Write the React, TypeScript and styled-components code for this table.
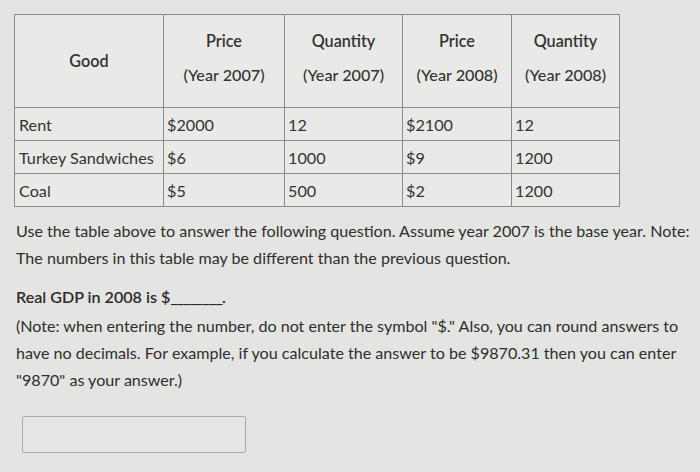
import styled, { createGlobalStyle } from "styled-components";

const GlobalStyle = createGlobalStyle`
  html, body {
    margin: 0;
    padding: 0;
    background: #e4e4e2;
  }
  body {
    font-family: Lato, "Open Sans", sans-serif;
    color: #2e2e2e;
  }
`;

const headers = [
  { top: "Price", bottom: "(Year 2007)" },
  { top: "Quantity", bottom: "(Year 2007)" },
  { top: "Price", bottom: "(Year 2008)" },
  { top: "Quantity", bottom: "(Year 2008)" },
];

const rows = [
  ["Rent", "$2000", "12", "$2100", "12"],
  ["Turkey Sandwiches", "$6", "1000", "$9", "1200"],
  ["Coal", "$5", "500", "$2", "1200"],
];

const widths = [149, 121, 118, 109, 108];

const App = () => {
  return (
    <>
      <GlobalStyle />
      <Page>
        <Table>
          <colgroup>
            {widths.map((w, i) => (
              <col key={i} style={{ width: w }} />
            ))}
          </colgroup>
          <thead>
            <tr>
              <GoodCell>Good</GoodCell>
              {headers.map((h, i) => (
                <HeadCell key={i}>
                  <HeadLine>{h.top}</HeadLine>
                  <HeadLine>{h.bottom}</HeadLine>
                </HeadCell>
              ))}
            </tr>
          </thead>
          <tbody>
            {rows.map((r, i) => (
              <tr key={i}>
                {r.map((c, j) => (
                  <Cell key={j}>{c}</Cell>
                ))}
              </tr>
            ))}
          </tbody>
        </Table>

        <Text>
          Use the table above to answer the following question. Assume year 2007 is the base year. Note:
          The numbers in this table may be different than the previous question.
        </Text>
        <Prompt>
          Real GDP in 2008 is $<Blank>________</Blank>.
        </Prompt>
        <Note>
          (Note: when entering the number, do not enter the symbol "$." Also, you can round answers to
          have no decimals. For example, if you calculate the answer to be $9870.31 then you can enter
          "9870" as your answer.)
        </Note>
        <Answer type="text" aria-label="answer" />
      </Page>
    </>
  );
};

const Page = styled.main`
  display: flex;
  flex-direction: column;
  align-items: flex-start;
  padding: 14px 0 0 14px;
  width: 700px;
  height: 472px;
  box-sizing: border-box;
  overflow: hidden;
`;

const Table = styled.table`
  border-collapse: collapse;
  table-layout: fixed;
  width: 605px;
  background: #e9e9e7;
  font-size: 16.2px;
  color: #333;
`;

const HeadCell = styled.th`
  height: 93px;
  border: 1px solid #8a8a88;
  font-weight: 600;
  text-align: center;
  vertical-align: middle;
  padding: 0 0 6px;
  box-sizing: border-box;
`;

const GoodCell = styled(HeadCell)`
  padding: 0 0 2px;
`;

const HeadLine = styled.div`
  line-height: 34px;
  &:last-child {
    font-weight: 500;
  }
`;

const Cell = styled.td`
  height: 33px;
  border: 1px solid #8a8a88;
  padding: 0 0 0 3px;
  box-sizing: border-box;
  text-align: left;
  vertical-align: middle;
  white-space: nowrap;
  &:first-child {
    padding-left: 4px;
  }
`;

const Text = styled.p`
  margin: 10px 0 0 2px;
  width: 690px;
  font-size: 16.1px;
  line-height: 27px;
  color: #2e2e2e;
`;

const Prompt = styled.p`
  margin: 12px 0 0 2px;
  font-size: 16.1px;
  line-height: 27px;
  font-weight: 600;
  color: #2a2a2a;
`;

const Blank = styled.span`
  letter-spacing: -1px;
`;

const Note = styled(Text)`
  margin-top: 2px;
  width: 675px;
`;

const Answer = styled.input`
  margin: 23px 0 0 8px;
  width: 224px;
  height: 37px;
  box-sizing: border-box;
  border: 1px solid #a9a9a7;
  border-radius: 2px;
  background: #e6e6e4;
  outline: none;
`;

export default App;
